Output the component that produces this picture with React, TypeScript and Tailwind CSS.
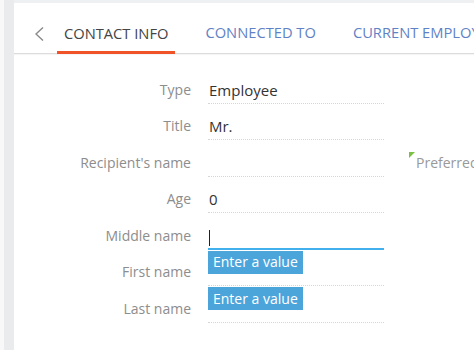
import React from 'react';

const rows: { label: string; value?: string; focused?: boolean; required?: boolean; extra?: boolean }[] = [
  { label: 'Type', value: 'Employee' },
  { label: 'Title', value: 'Mr.' },
  { label: "Recipient's name", extra: true },
  { label: 'Age', value: '0' },
  { label: 'Middle name', focused: true },
  { label: 'First name', required: true },
  { label: 'Last name', required: true },
];

const FieldRow = ({ row }: { row: (typeof rows)[number] }) => (
  <div className="flex h-[36.5px]">
    <div className="w-[177px] shrink-0 text-right self-end pb-[4px] text-[14px] leading-[20px] text-[#8d8d8d]">
      {row.label}
    </div>
    <div
      className={
        row.focused
          ? 'relative ml-[17px] w-[176px] shrink-0 flex items-end pb-[4px] text-[15px] leading-[20px]'
          : 'relative ml-[17px] w-[176px] shrink-0 flex items-end pb-[3px] border-b border-dotted border-[#d6d6d6] text-[15px] leading-[20px]'
      }
    >
      {row.value && <span className="pl-[1px] text-[#333]">{row.value}</span>}
      {row.focused && <span className="ml-[1px] w-px h-[16px] bg-[#222]" />}
      {row.focused && <span className="absolute left-0 right-0 bottom-0 h-[1.5px] bg-[#41b0ec]" />}
      {row.required && (
        <div className="absolute left-0 top-[1px] h-[23px] px-[5px] flex items-center bg-[#4ca5da] text-white text-[14px] leading-none">
          Enter a value
        </div>
      )}
    </div>
    {row.extra && (
      <div className="relative ml-[25px] self-end pb-[4px] pl-[7px] text-[14px] leading-[20px] text-[#999] whitespace-nowrap">
        <span className="absolute left-0 top-[-1px] w-0 h-0 border-t-[6px] border-r-[6px] border-t-[#7cc043] border-r-transparent" />
        Preferred
      </div>
    )}
  </div>
);

export default function App() {
  return (
    <div className="w-[474px] h-[350px] overflow-hidden flex bg-[#eef0f1] font-['Open_Sans',sans-serif]">
      {/* left strip */}
      <div className="w-[14px] shrink-0 flex">
        <div className="w-[4px] bg-[#f8f8f8]" />
        <div className="flex-1 bg-[#e9ebed]" />
      </div>

      <div className="flex-1 mt-[3px] bg-white flex flex-col min-w-0 overflow-hidden">
        {/* tabs */}
        <div className="h-[51px] shrink-0 flex items-stretch border-b border-[#dcdcdc] shadow-[0_1px_1px_rgba(0,0,0,0.04)] whitespace-nowrap">
          <div className="ml-[21px] pt-[12px] flex items-center">
            <svg width="9" height="14" viewBox="0 0 9 14" fill="none">
              <polyline points="8,0.5 1,7 8,13.5" stroke="#8a8a8a" strokeWidth="1.4" />
            </svg>
          </div>
          <div className="ml-[13px] mb-[-1px] px-[7px] pt-[12px] flex items-center border-b-[3px] border-[#ef5327] text-[14.7px] text-[#444]">
            CONTACT INFO
          </div>
          <div className="ml-[23px] px-[7px] pt-[12px] pb-[3px] flex items-center text-[14.7px] text-[#5f82c6]">
            CONNECTED TO
          </div>
          <div className="ml-[23px] px-[7px] pt-[12px] pb-[3px] flex items-center text-[14.7px] text-[#5f82c6]">
            CURRENT EMPLOYER
          </div>
        </div>

        {/* form */}
        <div className="pt-[13px] flex flex-col">
          {rows.map((r) => (
            <FieldRow key={r.label} row={r} />
          ))}
        </div>
      </div>
    </div>
  );
}
